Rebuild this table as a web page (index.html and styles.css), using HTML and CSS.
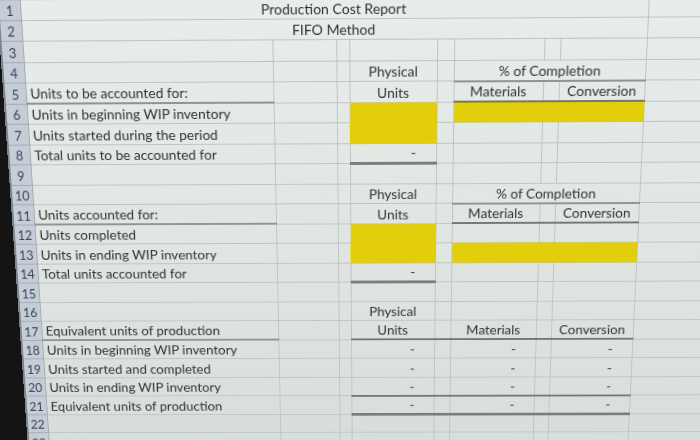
FILE: index.html
```html
<!DOCTYPE html>
<html lang="en">
<head>
<meta charset="utf-8">
<title>Production Cost Report</title>
<link rel="stylesheet" href="styles.css">
</head>
<body>
<div class="photo">
<table class="sheet">
<colgroup>
<col class="c-hd"><col class="c-a"><col class="c-b"><col class="c-c"><col class="c-d"><col class="c-e"><col class="c-f"><col class="c-g"><col class="c-h"><col class="c-i">
</colgroup>
<tbody>
<tr class="r-first"><th>1</th><td colspan="8" class="ctr title"><span>Production Cost Report</span></td><td></td></tr>
<tr><th>2</th><td colspan="8" class="ctr">FIFO Method</td><td></td></tr>
<tr><th>3</th><td></td><td></td><td></td><td></td><td></td><td></td><td></td><td></td><td></td></tr>
<tr><th>4</th><td></td><td></td><td></td><td class="ctr">Physical</td><td></td><td colspan="3" class="ctr bb-med">% of Completion</td><td></td></tr>
<tr><th>5</th><td class="bb-med">Units to be accounted for:</td><td></td><td></td><td class="ctr">Units</td><td></td><td class="ctr bb-dark">Materials</td><td class="bb-dark"></td><td class="ctr bb-dark">Conversion</td><td></td></tr>
<tr><th>6</th><td>Units in beginning WIP inventory</td><td></td><td></td><td rowspan="2" class="fill"></td><td></td><td colspan="3" class="fill"></td><td></td></tr>
<tr><th>7</th><td>Units started during the period</td><td></td><td></td><td></td><td></td><td></td><td></td><td></td></tr>
<tr><th>8</th><td>Total units to be accounted for</td><td></td><td></td><td class="num bb-dbl">-</td><td></td><td></td><td></td><td></td><td></td></tr>
<tr><th>9</th><td></td><td></td><td></td><td></td><td></td><td></td><td></td><td></td><td></td></tr>
<tr><th>10</th><td></td><td></td><td></td><td class="ctr">Physical</td><td></td><td colspan="3" class="ctr bb-med">% of Completion</td><td></td></tr>
<tr><th>11</th><td class="bb-med">Units accounted for:</td><td></td><td></td><td class="ctr">Units</td><td></td><td class="ctr bb-dark">Materials</td><td class="bb-dark"></td><td class="ctr bb-dark">Conversion</td><td></td></tr>
<tr><th>12</th><td>Units completed</td><td></td><td></td><td rowspan="2" class="fill"></td><td></td><td></td><td></td><td></td><td></td></tr>
<tr><th>13</th><td>Units in ending WIP inventory</td><td></td><td></td><td></td><td colspan="3" class="fill"></td><td></td></tr>
<tr><th>14</th><td>Total units accounted for</td><td></td><td></td><td class="num bb-dbl">-</td><td></td><td></td><td></td><td></td><td></td></tr>
<tr><th>15</th><td></td><td></td><td></td><td></td><td></td><td></td><td></td><td></td><td></td></tr>
<tr><th>16</th><td></td><td></td><td></td><td class="ctr">Physical</td><td></td><td></td><td></td><td></td><td></td></tr>
<tr><th>17</th><td class="bb-med">Equivalent units of production</td><td></td><td></td><td class="ctr bb-dark">Units</td><td class="bb-dark"></td><td class="ctr bb-dark">Materials</td><td class="bb-dark"></td><td class="ctr bb-dark">Conversion</td><td></td></tr>
<tr><th>18</th><td>Units in beginning WIP inventory</td><td></td><td></td><td class="num">-</td><td></td><td class="num">-</td><td></td><td class="num">-</td><td></td></tr>
<tr><th>19</th><td>Units started and completed</td><td></td><td></td><td class="num">-</td><td></td><td class="num">-</td><td></td><td class="num">-</td><td></td></tr>
<tr><th>20</th><td>Units in ending WIP inventory</td><td></td><td></td><td class="num bb-dark">-</td><td class="bb-dark"></td><td class="num bb-dark">-</td><td class="bb-dark"></td><td class="num bb-dark">-</td><td></td></tr>
<tr><th>21</th><td>Equivalent units of production</td><td></td><td></td><td class="num bb-dbl">-</td><td class="bb-dbl"></td><td class="num bb-dbl">-</td><td class="bb-dbl"></td><td class="num bb-dbl">-</td><td></td></tr>
<tr><th>22</th><td></td><td></td><td></td><td></td><td></td><td></td><td></td><td></td><td></td></tr>
<tr><th>23</th><td></td><td></td><td></td><td></td><td></td><td></td><td></td><td></td><td></td></tr>
</tbody>
</table>
</div>
</body>
</html>
```

FILE: styles.css
```css
html, body {
  margin: 0;
  padding: 0;
}

body {
  width: 700px;
  height: 440px;
  overflow: hidden;
  background: #141414;
  font-family: Lato, "Open Sans", sans-serif;
}

.photo {
  width: 740px;
  transform-origin: 0 0;
  transform: matrix3d(0.996882, -0.0057464, 0, -0.0000097648,
                      0.072068, 1.03988, 0, 0.0001881,
                      0, 0, 1, 0,
                      -3.3367, -0.6, 0, 0.996547);
}

.sheet {
  border-collapse: collapse;
  table-layout: fixed;
  width: 740px;
  color: #2f3437;
  font-size: 14px;
  background: linear-gradient(180deg, #e8ecea 0%, #e1e6e3 45%, #d7ddd9 100%);
}

.c-hd { width: 22px; }
.c-a { width: 251px; }
.c-b { width: 64px; }
.c-c { width: 13px; }
.c-d { width: 88px; }
.c-e { width: 17px; }
.c-f { width: 90px; }
.c-g { width: 16px; }
.c-h { width: 86px; }
.c-i { width: 93px; }

.sheet tr { height: 20.5px; }
.sheet tr.r-first { height: 19.5px; }

.sheet td {
  border: 1px solid #bec5c4;
  padding: 0 4px 1px;
  line-height: 16px;
  vertical-align: bottom;
  white-space: nowrap;
  overflow: hidden;
}

.sheet td.title {
  line-height: 14px;
  padding-bottom: 2px;
}

.sheet th {
  background: #c6cdd6;
  border: 1px solid #a3acb6;
  border-left: 2px solid #7c848c;
  color: #34465a;
  font-weight: normal;
  font-size: 13px;
  line-height: 15px;
  padding: 0 0 1px;
  text-align: center;
  vertical-align: bottom;
}

.ctr { text-align: center; }

.num {
  text-align: right;
  padding-right: 20px !important;
}

.fill {
  background: #e3ce0b;
  border-color: #e3ce0b !important;
}

.sheet .bb-med { border-bottom: 2px solid #8f9595; }
.sheet .bb-dark { border-bottom: 2px solid #727878; }
.sheet .bb-dbl { border-bottom: 3px solid #787e7e; }
```
